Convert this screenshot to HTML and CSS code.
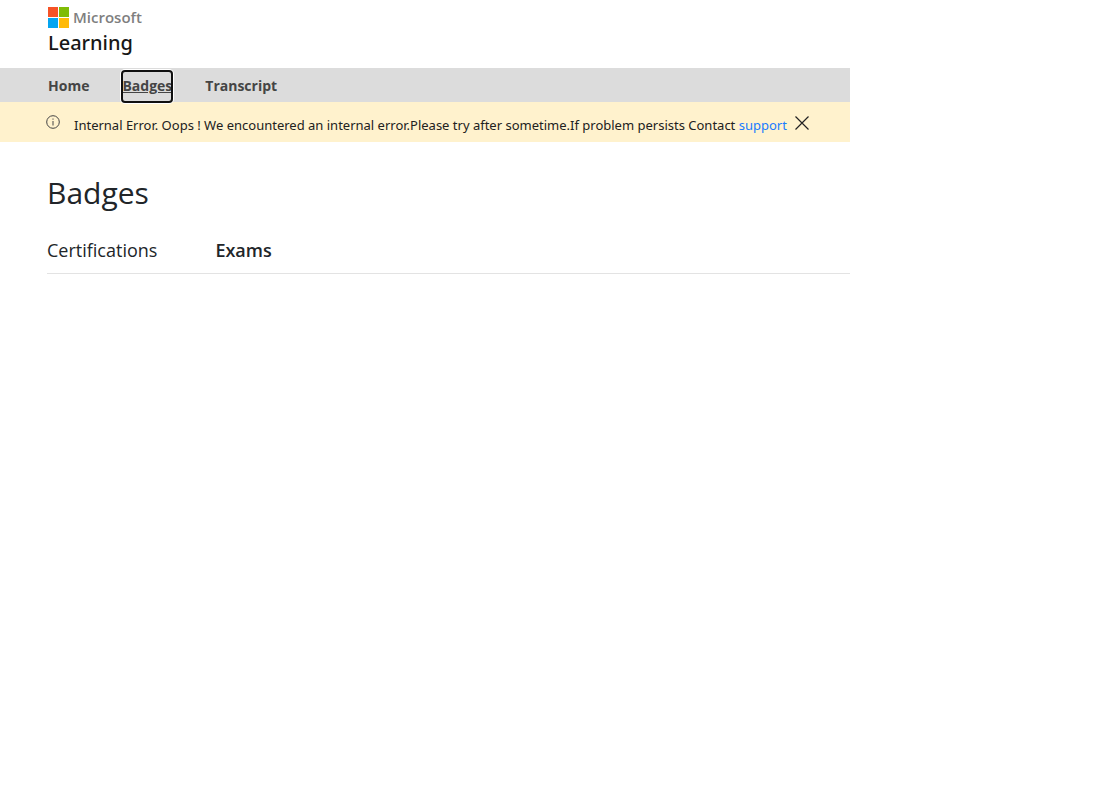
FILE: index.html
```html
<!DOCTYPE html>
<html lang="en">
<head>
<meta charset="utf-8">
<title>Badges - Microsoft Learning</title>
<link rel="stylesheet" href="styles.css">
</head>
<body>
<div class="page">
  <header class="brand">
    <div class="logo">
      <svg class="logo-mark" viewBox="0 0 21 21" aria-hidden="true">
        <path fill="#f65327" d="M0 0h10v10H0z"/>
        <path fill="#80bc06" d="M11 0h10v10H11z"/>
        <path fill="#05a5f0" d="M0 11h10v10H0z"/>
        <path fill="#ffba08" d="M11 11h10v10H11z"/>
      </svg>
      <span class="logo-name">Microsoft</span>
    </div>
    <div class="product">Learning</div>
  </header>
  <nav class="nav">
    <a class="nav-link" href="#home">Home</a>
    <a class="nav-link current" href="#badges">Badges</a>
    <a class="nav-link" href="#transcript">Transcript</a>
  </nav>
  <div class="alert" role="alert">
    <svg class="info" viewBox="0 0 14 14" aria-hidden="true">
      <circle cx="7" cy="7" r="6.3"/>
      <path d="M7 6v4.5M7 3.5v1.2"/>
    </svg>
    <p class="message">Internal Error. Oops ! We encountered an internal error.Please try after sometime.If problem persists Contact <a class="support" href="#support">support</a></p>
    <button class="close" type="button" aria-label="Close">
      <svg class="cross" viewBox="0 0 14 14" aria-hidden="true"><path d="M.5.5l13 13M13.5.5l-13 13"/></svg>
    </button>
  </div>
  <main class="content">
    <h1 class="title">Badges</h1>
    <div class="tabs" role="tablist">
      <button class="tab" type="button" role="tab" aria-selected="false">Certifications</button>
      <button class="tab selected" type="button" role="tab" aria-selected="true">Exams</button>
    </div>
  </main>
</div>
</body>
</html>
```
FILE: styles.css
```css
* { box-sizing: border-box; }
body {
  margin: 0;
  background: #fff;
  color: #212529;
  font-family: "Open Sans", "Noto Sans", sans-serif;
  font-size: 13px;
}
.page { max-width: 850px; }
.brand { padding: 7px 48px 10px; }
.logo { display: flex; align-items: center; gap: 4px; height: 21px; }
.logo-mark { width: 21px; height: 21px; }
.logo-name { color: #7f7f7f; font-size: 15px; font-weight: 600; line-height: 20px; padding-bottom: 2px; }
.product { color: #171717; font-family: "Noto Sans", sans-serif; font-size: 20px; font-weight: 500; line-height: 30px; }
.nav {
  display: flex;
  align-items: center;
  gap: 33px;
  height: 34px;
  padding: 2px 48px 0;
  background: #dcdcdc;
}
.nav-link {
  padding-bottom: 2px;
  color: #454545;
  font-size: 14px;
  font-weight: 700;
  line-height: 29px;
  text-decoration: none;
}
.current {
  position: relative;
  text-decoration: underline;
  outline: 2px solid #101010;
  outline-offset: -1px;
  border-radius: 3px;
  box-shadow: 0 0 0 2px #fff;
}
.alert {
  display: flex;
  align-items: center;
  height: 40px;
  padding: 2px 40px 0 46px;
  background: #fff2cd;
}
.info { width: 14px; height: 14px; margin: 0 14px 2px 0; fill: none; stroke: #444; stroke-width: 1; }
.message { margin: 4px 8px 0 0; font-family: "Noto Sans", sans-serif; line-height: 20px; color: #212121; white-space: nowrap; }
.support { color: #1a7cff; text-decoration: none; }
.close { display: flex; margin: 0; padding: 0; border: 0; background: none; }
.cross { width: 14px; height: 14px; fill: none; stroke: #222; stroke-width: 1.2; }
.content { padding: 30px 0 0 47px; }
.title { margin: 0; font-size: 30px; font-weight: 400; line-height: 42px; }
.tabs {
  display: flex;
  gap: 58px;
  padding: 22px 0 8px;
  border-bottom: 1px solid #e3e3e3;
}
.tab {
  padding: 0;
  border: 0;
  background: none;
  color: #212529;
  font-family: inherit;
  font-size: 18px;
  line-height: 29px;
}
.selected { font-weight: 600; }
```
